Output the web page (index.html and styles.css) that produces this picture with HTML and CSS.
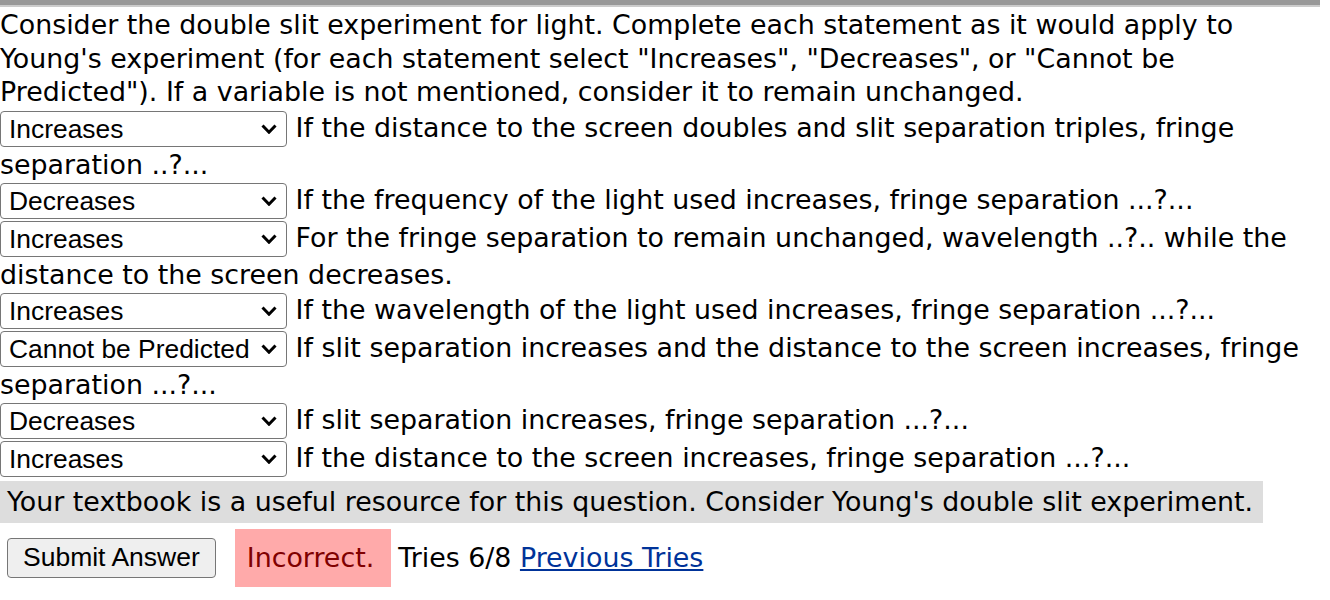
FILE: index.html
```html
<!DOCTYPE html>
<html lang="en">
<head>
    <meta charset="UTF-8">
    <title>Double Slit Experiment</title>
    <link rel="stylesheet" href="styles.css">
</head>
<body>
    <div class="problem">
        <div class="intro">
            Consider the double slit experiment for light. Complete each statement as it would apply to Young's experiment (for each statement select "Increases", "Decreases", or "Cannot be Predicted"). If a variable is not mentioned, consider it to remain unchanged.
        </div>

        <div class="statements">
            <select class="choice">
                <option selected>Increases</option>
                <option>Decreases</option>
                <option>Cannot be Predicted</option>
            </select> If the distance to the screen doubles and slit separation triples, fringe separation ..?...<br>
            <select class="choice">
                <option>Increases</option>
                <option selected>Decreases</option>
                <option>Cannot be Predicted</option>
            </select> If the frequency of the light used increases, fringe separation ...?...<br>
            <select class="choice">
                <option selected>Increases</option>
                <option>Decreases</option>
                <option>Cannot be Predicted</option>
            </select> For the fringe separation to remain unchanged, wavelength ..?.. while the distance to the screen decreases.<br>
            <select class="choice">
                <option selected>Increases</option>
                <option>Decreases</option>
                <option>Cannot be Predicted</option>
            </select> If the wavelength of the light used increases, fringe separation ...?...<br>
            <select class="choice">
                <option>Increases</option>
                <option>Decreases</option>
                <option selected>Cannot be Predicted</option>
            </select> If slit separation increases and the distance to the screen increases, fringe separation ...?...<br>
            <select class="choice">
                <option>Increases</option>
                <option selected>Decreases</option>
                <option>Cannot be Predicted</option>
            </select> If slit separation increases, fringe separation ...?...<br>
            <select class="choice">
                <option selected>Increases</option>
                <option>Decreases</option>
                <option>Cannot be Predicted</option>
            </select> If the distance to the screen increases, fringe separation ...?...
        </div>

        <div class="hint">Your textbook is a useful resource for this question. Consider Young's double slit experiment.</div>

        <div class="answer-row">
            <button type="button" class="submit">Submit Answer</button>
            <span class="result">Incorrect.</span>
            <span class="tries">Tries 6/8 <a href="#">Previous Tries</a></span>
        </div>
    </div>
</body>
</html>
```

FILE: styles.css
```css
body {
    margin: 0;
    padding: 0;
    background-color: #fff;
    color: #000;
    font-family: Verdana, "DejaVu Sans", sans-serif;
    font-size: 26.85px;
}

.problem {
    width: 1320px;
    border-top: 5px solid #999;
}

/* thin light strip under the dark top rule */
.problem::before {
    content: "";
    display: block;
    height: 2px;
    background-color: #ccc;
}

.intro {
    line-height: 33.5px;
    padding-top: 1px;
    margin-bottom: 1px;
}

.statements {
    line-height: 34px;
}

.choice {
    appearance: none;
    -webkit-appearance: none;
    box-sizing: border-box;
    width: 287px;
    height: 36px;
    margin: 1px 0;
    padding: 0 30px 0 8px;
    border: 1px solid #767676;
    border-radius: 4px;
    background-color: #fff;
    background-image: url("data:image/svg+xml;utf8,<svg xmlns='http://www.w3.org/2000/svg' width='16' height='10' viewBox='0 0 16 10'><path d='M1.5 1.5 L8 8.2 L14.5 1.5' fill='none' stroke='black' stroke-width='3'/></svg>");
    background-repeat: no-repeat;
    background-position: right 9px center;
    font-family: Arial, "Liberation Sans", sans-serif;
    font-size: 26.4px;
    color: #000;
    vertical-align: middle;
}

.hint {
    display: inline-block;
    margin-top: 3px;
    padding: 3px 10px 4px 7px;
    line-height: 35px;
    background-color: #ddd;
}

.answer-row {
    display: flex;
    align-items: center;
    margin-top: 6px;
}

.submit {
    margin-left: 7px;
    height: 40px;
    padding: 0 15px;
    background-color: #efefef;
    border: 1px solid #767676;
    border-radius: 4px;
    font-family: Arial, "Liberation Sans", sans-serif;
    font-size: 26.5px;
    color: #000;
}

.result {
    margin-left: 19px;
    padding: 0 17px 0 12px;
    height: 58px;
    line-height: 58px;
    background-color: #ffaaaa;
    color: #800000;
}

.tries {
    margin-left: 7px;
}

.tries a {
    color: #039;
}
```
